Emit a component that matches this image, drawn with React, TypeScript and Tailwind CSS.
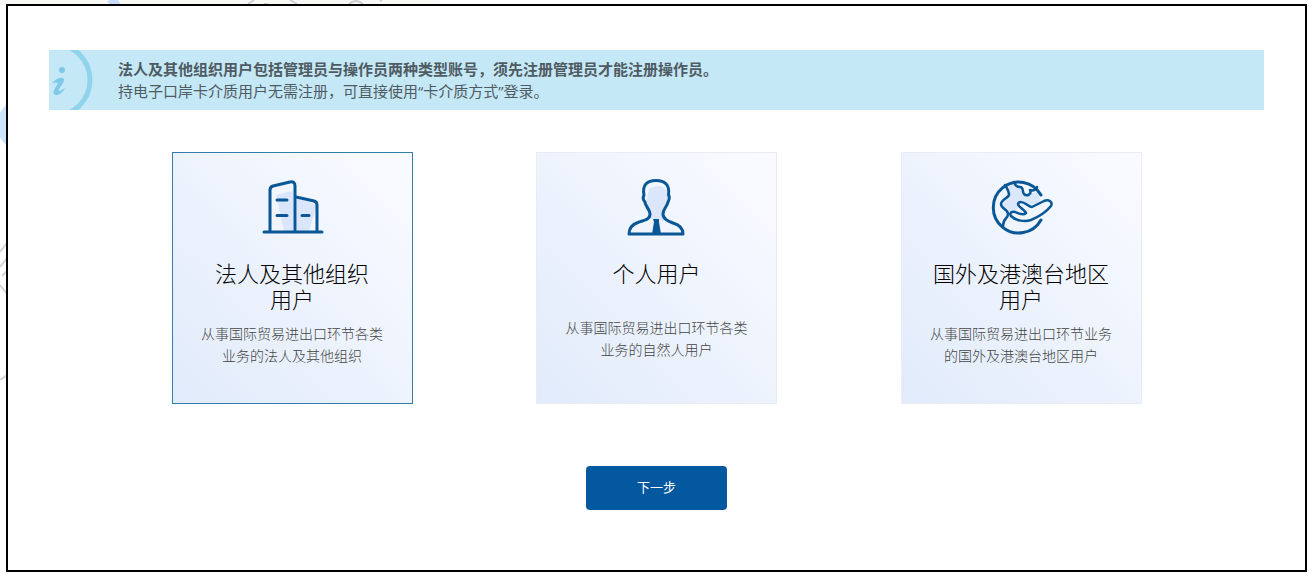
import React, { useState } from 'react';

const OrganizationIcon = () => (
  <svg viewBox="-3 0 110 80" className="h-20 w-[110px]" fill="none" stroke="#0a5797" strokeLinecap="round" strokeLinejoin="round" aria-hidden="true">
    <path d="M36 30 L53 26 V66 H44 Z" fill="#d9e6fb" stroke="none" />
    <path d="M57 34 L77 40 L69 66 H57 Z" fill="#d9e6fb" stroke="none" />
    <path strokeWidth="3" d="M24 67 H82 M30 66 V25 Q30 22 33 21 L50 17 Q55 16 55 21 V66 M56 32 L74 36 Q77 37 77 40 V66" />
    <path strokeWidth="3" d="M37 35 H47 M37 50.5 H47 M62 50.5 H69" />
  </svg>
);

const PersonIcon = () => (
  <svg viewBox="-3 0 110 80" className="h-20 w-[110px]" fill="none" stroke="#0a5797" strokeLinecap="round" strokeLinejoin="round" aria-hidden="true">
    <path d="M44 24 Q55 17 62 26 L63 39 L58 47 L59 56 L52 55 L45 53 L46 46 L41 38 Z" fill="#dbe6fb" stroke="none" />
    <path strokeWidth="3" d="M24 69 C24 62 28 59 34 57 C41 55 45 54 45 49 C45 46 43 44 42 42 C41 40 40 39 40 37 C38 35 38 32 39 30 C37 20 42 15.5 51 15.5 C60 15.5 65 20 63.5 30 C65 32 64 35 63 37 C62 42 58 44 58 49 C58 54 63 56 68 58 C75 60 78 63 78 69 Z" />
    <path d="M48 54 H54 V57 L56 69 H47 L49 57 Z" fill="#0a5797" stroke="none" />
  </svg>
);

const OverseasIcon = () => (
  <svg viewBox="1 0 110 80" className="h-20 w-[110px]" fill="none" stroke="#0a5797" strokeLinecap="round" strokeLinejoin="round" aria-hidden="true">
    <path d="M43 20 L50 18 L60 29 L74 27 L75 37 L64 41 L53 37 L52 47 L46 48 L37 44 L38 36 L44 31 Z" fill="#dbe8fb" stroke="none" />
    <path strokeWidth="3" d="M76 30 A25.5 25.5 0 1 0 76 55" />
    <path strokeWidth="2.5" d="M40 20 C42 23 44 26 44 30 C43 33 36 35 36 39 C36 44 43 44 43 49 C43 54 38 53 38 61" />
    <path strokeWidth="2.5" d="M49 17 C50 21 52 22 55 22 C59 22 57 27 59 29 C62 32 67 29 65 25 C68 26 71 25 72 22" />
    <path strokeWidth="2.5" d="M67 42 L79 36 C84 34 88 37 86 41 C82 46 73 52 66 55 C60 57 51 56 46 51 C44 48 47 46 50 47 C54 49 59 50 61 48 C60 45 53 42 53 39 C54 36 58 37 61 39 C64 41 65 42 67 42" />
  </svg>
);

const UserTypeCard = ({ id, icon, title, description, checked, onSelect }: {
  id: string;
  icon: React.ReactNode;
  title: string[];
  description: string[];
  checked: boolean;
  onSelect: (id: string) => void;
}) => {
  return (
    <label
      className={`flex w-full max-w-[241px] min-h-[252px] cursor-pointer flex-col items-center border bg-linear-to-bl from-[#fafbff] to-[#e1ebfb] px-4 pt-3 pb-8 text-center ${
        checked ? 'border-[#337ea9]' : 'border-[#e9edf3]'
      }`}
    >
      <input
        type="radio"
        name="userType"
        value={id}
        checked={checked}
        onChange={() => onSelect(id)}
        className="sr-only"
      />
      {icon}
      <span className="mt-[15px] block min-h-[46px] text-[22px] leading-[26px] font-light text-black">
        {title.map((line) => (
          <span key={line} className="block">{line}</span>
        ))}
      </span>
      <span className="mt-[11px] block text-sm leading-[22px] font-light text-[#444444]">
        {description.map((line) => (
          <span key={line} className="block whitespace-nowrap">{line}</span>
        ))}
      </span>
    </label>
  );
};

const NoticeBanner = () => (
  <div className="flex items-center bg-[#c5e8f7]">
    <svg viewBox="0 0 44 60" className="h-[60px] w-11 shrink-0" aria-hidden="true">
      <circle cx="5" cy="30" r="36" fill="none" stroke="#8fd3ec" strokeWidth="5" />
      <circle cx="13" cy="20" r="3" fill="#7cc9e8" />
      <path d="M3 33 Q9 27 14 28 Q16 29 14 33 L10 39 Q9 42 11 41 L16 38 Q12 45 8 45 Q3 45 5 40 L9 33 Q7 32 3 33 Z" fill="#7cc9e8" />
    </svg>
    <div className="ml-[25px] text-[15px] leading-[22px] text-[#4f5b62]">
      <p className="font-bold">法人及其他组织用户包括管理员与操作员两种类型账号，须先注册管理员才能注册操作员。</p>
      <p>持电子口岸卡介质用户无需注册，可直接使用“卡介质方式”登录。</p>
    </div>
  </div>
);

// Faint watermark that shows in the margins around the panel
const Watermark = () => (
  <svg className="absolute inset-0 -z-10 h-[576px] w-[440px]" viewBox="0 0 440 576" fill="none" aria-hidden="true">
    <path d="M0 0 H440 V5 H0 Z" fill="#f8f8f6" />
    <path d="M110 5 L118 0" stroke="#c6dcfa" strokeWidth="9" />
    <circle cx="24" cy="125" r="27" fill="#cde5fb" />
    <path d="M248 4 L254 0 M264 4 H268 M290 0 L297 4 M349 4 Q356 -2 363 4 M380 0 L382 1" stroke="#cfcfcf" strokeWidth="2" />
    <path d="M0 252 L7 243 M0 267 L7 258 M2 276 L7 271 M0 285 L7 294 M0 380 L7 375" stroke="#d4d4d4" strokeWidth="2" />
  </svg>
);

const App = () => {
  const [selected, setSelected] = useState('organization');

  const userTypes = [
    {
      id: 'organization',
      icon: <OrganizationIcon />,
      title: ['法人及其他组织', '用户'],
      description: ['从事国际贸易进出口环节各类', '业务的法人及其他组织']
    },
    {
      id: 'person',
      icon: <PersonIcon />,
      title: ['个人用户'],
      description: ['从事国际贸易进出口环节各类', '业务的自然人用户']
    },
    {
      id: 'overseas',
      icon: <OverseasIcon />,
      title: ['国外及港澳台地区', '用户'],
      description: ['从事国际贸易进出口环节业务', '的国外及港澳台地区用户']
    }
  ];

  return (
    <div className="relative isolate bg-white px-1.5 pt-1 pb-1 font-['Open_Sans','Noto_Sans_CJK_SC',sans-serif]">
      <Watermark />
      <main className="border-2 border-black bg-white px-[41px] pt-11 pb-[60px]">
        <NoticeBanner />
        <form onSubmit={(e) => e.preventDefault()}>
          <div role="radiogroup" aria-label="用户类型" className="mx-auto mt-[42px] grid w-[90%] grid-cols-3 justify-items-center">
            {userTypes.map((type) => (
              <UserTypeCard
                key={type.id}
                {...type}
                checked={selected === type.id}
                onSelect={setSelected}
              />
            ))}
          </div>
          <div className="mt-[62px] flex justify-center">
            <button type="submit" className="h-11 w-[141px] rounded bg-[#04589f] text-[13px] text-white">
              下一步
            </button>
          </div>
        </form>
      </main>
    </div>
  );
};

export default App;
